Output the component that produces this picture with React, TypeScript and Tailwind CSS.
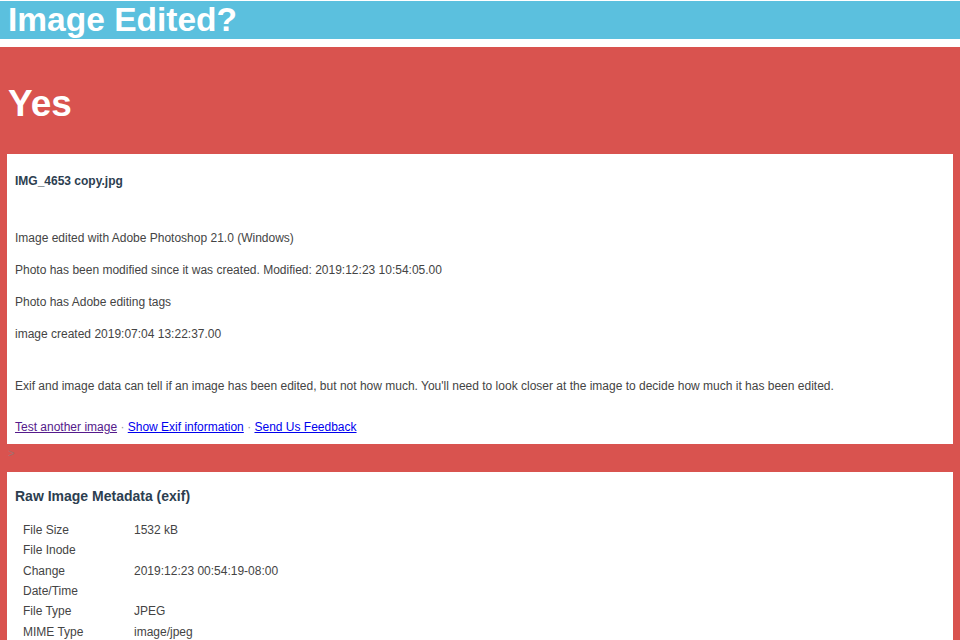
export default function App() {
  const rows: [string, string][] = [
    ["File Size", "1532 kB"],
    ["File Inode", ""],
    ["Change", "2019:12:23 00:54:19-08:00"],
    ["Date/Time", ""],
    ["File Type", "JPEG"],
    ["MIME Type", "image/jpeg"],
  ];

  return (
    <div className="h-[640px] overflow-hidden bg-white font-['Liberation_Sans',Arial,sans-serif]">
      <div className="mt-px h-[38px] bg-[#5bc0de] pl-2">
        <h1 className="text-[33.5px] font-bold leading-[38px] text-white">Image Edited?</h1>
      </div>
      <div className="mt-2 h-full bg-[#d9534f]">
        <div className="h-[107px] pl-2 pt-[35px]">
          <h2 className="text-[37px] font-bold leading-[44px] text-white">Yes</h2>
        </div>
        <div className="ml-[7px] mr-[7px] bg-white pb-[7px] pl-2 pt-[17px] text-[12px] leading-5 text-[#444]">
          <p className="font-bold text-[#2c3e50]">IMG_4653 copy.jpg</p>
          <p className="mt-[37px]">Image edited with Adobe Photoshop 21.0 (Windows)</p>
          <p className="mt-3">Photo has been modified since it was created. Modified: 2019:12:23 10:54:05.00</p>
          <p className="mt-3">Photo has Adobe editing tags</p>
          <p className="mt-3">image created 2019:07:04 13:22:37.00</p>
          <p className="mt-8">
            Exif and image data can tell if an image has been edited, but not how much. You'll need to look closer at
            the image to decide how much it has been edited.
          </p>
          <p className="mt-[21px]">
            <a href="#" className="text-[#551a8b] underline">
              Test another image
            </a>
            <span className="text-[#999]"> · </span>
            <a href="#" className="text-[#0000ee] underline">
              Show Exif information
            </a>
            <span className="text-[#999]"> · </span>
            <a href="#" className="text-[#0000ee] underline">
              Send Us Feedback
            </a>
          </p>
        </div>
        <div className="h-[28px] pl-2 text-[11px] leading-[18px] text-[#a07070]">&gt;</div>
        <div className="ml-[7px] mr-[7px] bg-white pl-2 pt-[14px] text-[12px] text-[#444]">
          <h3 className="text-[14px] font-bold leading-5 text-[#2c3e50]">Raw Image Metadata (exif)</h3>
          <div className="mt-[14px] pl-2">
            {rows.map(([label, value]) => (
              <div key={label} className="flex h-[20.3px] items-center">
                <span className="w-[111px]">{label}</span>
                <span>{value}</span>
              </div>
            ))}
          </div>
        </div>
      </div>
    </div>
  );
}
